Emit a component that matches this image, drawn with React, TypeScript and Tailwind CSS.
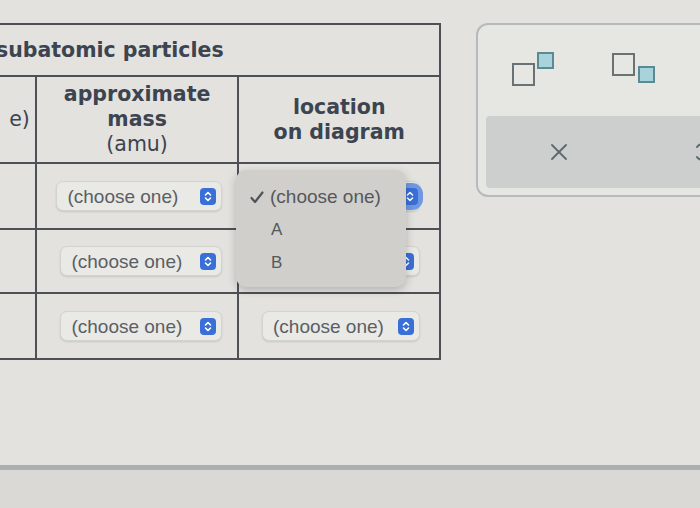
import { X } from 'lucide-react';

const verdana = { fontFamily: '"DejaVu Sans", Verdana, sans-serif' };
const sans = { fontFamily: '"Liberation Sans", Arial, sans-serif' };

function Stepper() {
    return (
        <span className="flex h-[17px] w-[16px] items-center justify-center rounded-[4px] bg-[#3a6fd8]">
            <svg width="8" height="11" viewBox="0 0 8 11" fill="none">
                <path d="M1.5 4 L4 1.5 L6.5 4" stroke="#ffffff" strokeWidth="1.6" strokeLinecap="round" strokeLinejoin="round" />
                <path d="M1.5 7 L4 9.5 L6.5 7" stroke="#ffffff" strokeWidth="1.6" strokeLinecap="round" strokeLinejoin="round" />
            </svg>
        </span>
    );
}

function ChooseOne({ width = 'w-[162px]', focused = false }: { width?: string; focused?: boolean }) {
    return (
        <div
            className={`relative flex h-[30px] ${width} items-center justify-between rounded-[7px] border border-[#d3d3d0] bg-[#e9e9e6] pl-[10px] ${focused ? 'pr-[1px]' : 'pr-[5px]'} shadow-[0_1px_2px_rgba(0,0,0,0.12)]`}
        >
            <span className="text-[19px] leading-none text-[#5b5e63]" style={sans}>
                (choose one)
            </span>
            <span className={focused ? 'rounded-[6px] ring-[5px] ring-[#6f98e4]' : ''}>
                <Stepper />
            </span>
        </div>
    );
}

export default function App() {
    return (
        <div className="relative flex h-[508px] w-[700px] flex-col overflow-hidden bg-[#e3e2de]">
            <div className="flex items-start pt-[23px]">
                {/* Tabla de partículas */}
                <div className="relative">
                    <table className="w-[441px] border-collapse text-[#3c4450]" style={verdana}>
                        <colgroup>
                            <col className="w-[36px]" />
                            <col className="w-[203px]" />
                            <col className="w-[202px]" />
                        </colgroup>
                        <tbody>
                            <tr className="h-[52px]">
                                <td colSpan={3} className="border-y-2 border-r-2 border-[#4d5055] p-0">
                                    <span className="ml-[-4px] text-[20.5px] font-bold">subatomic particles</span>
                                </td>
                            </tr>
                            <tr className="h-[87px]">
                                <td className="border-y-2 border-r-2 border-[#4d5055] p-0 text-right">
                                    <span className="pr-[5px] text-[20.5px]">e)</span>
                                </td>
                                <td className="border-2 border-[#4d5055] p-0 text-center text-[20.5px] leading-[25px]">
                                    <div className="font-bold">approximate</div>
                                    <div className="font-bold">mass</div>
                                    <div>(amu)</div>
                                </td>
                                <td className="border-2 border-[#4d5055] p-0 text-center text-[20.5px] font-bold leading-[25px]">
                                    <div>location</div>
                                    <div>on diagram</div>
                                </td>
                            </tr>
                            {[66, 64, 66].map((h, i) => (
                                <tr key={i} style={{ height: h }}>
                                    <td className="border-y-2 border-r-2 border-[#4d5055] p-0" />
                                    <td className="border-2 border-[#4d5055] p-0">
                                        <div className="flex justify-end pr-[15px]">
                                            <ChooseOne width={i === 0 ? 'w-[166px]' : 'w-[162px]'} />
                                        </div>
                                    </td>
                                    <td className="border-2 border-[#4d5055] p-0">
                                        <div className="flex justify-end pr-[19px]">
                                            <ChooseOne width="w-[158px]" focused={i === 0} />
                                        </div>
                                    </td>
                                </tr>
                            ))}
                        </tbody>
                    </table>

                    {/* Menú desplegable abierto */}
                    <div
                        className="absolute left-[236px] top-[147px] w-[170px] rounded-[10px] bg-[#d0cfcb] pb-[8px] pt-[11px] shadow-[0_3px_10px_rgba(0,0,0,0.22)]"
                        style={sans}
                    >
                        <div className="flex h-[32px] items-center text-[19px] text-[#55585d]">
                            <span className="flex w-[34px] justify-start pl-[14px]">
                                <svg width="14" height="13" viewBox="0 0 14 13" fill="none">
                                    <path d="M1.5 7 L5 11 L12.5 1.5" stroke="#4f5257" strokeWidth="2.2" strokeLinecap="round" strokeLinejoin="round" />
                                </svg>
                            </span>
                            <span>(choose one)</span>
                        </div>
                        <div className="flex h-[33px] items-center pl-[35px] text-[17px] text-[#55585d]">A</div>
                        <div className="flex h-[33px] items-center pl-[35px] text-[17px] text-[#55585d]">B</div>
                    </div>
                </div>

                {/* Panel de herramientas */}
                <div className="ml-[35px] flex h-[174px] w-[260px] shrink-0 flex-col rounded-[12px] border-2 border-[#b7babb] bg-[#e6e6e3] px-[8px]">
                    <div className="flex h-[91px] items-start pt-[27px]">
                        <div className="ml-[26px] flex items-start">
                            <div className="mt-[11px] h-[23px] w-[23px] border-2 border-[#6b7273]" />
                            <div className="ml-[2px] h-[17px] w-[17px] border-2 border-[#5a8a92] bg-[#a9d3db]" />
                        </div>
                        <div className="ml-[58px] flex items-start">
                            <div className="mt-[1px] h-[23px] w-[23px] border-2 border-[#6b7273]" />
                            <div className="ml-[3px] mt-[14px] h-[17px] w-[17px] border-2 border-[#5a8a92] bg-[#a9d3db]" />
                        </div>
                    </div>
                    <div className="flex h-[72px] items-center rounded-[4px] bg-[#cdcfcf]">
                        <X className="ml-[59px] h-[28px] w-[28px] text-[#5e6b6d]" strokeWidth={1.6} />
                        <svg className="ml-[118px]" width="26" height="26" viewBox="0 0 26 26" fill="none">
                            <path d="M6 8 A8 8 0 1 1 6 18" stroke="#5e6b6d" strokeWidth="2" strokeLinecap="round" />
                        </svg>
                    </div>
                </div>
            </div>

            <div className="flex-1" />
            <div className="h-[5px] w-full bg-[#aab0b2]" />
            <div className="h-[38px] w-full bg-[#dad9d6]" />
        </div>
    );
}
